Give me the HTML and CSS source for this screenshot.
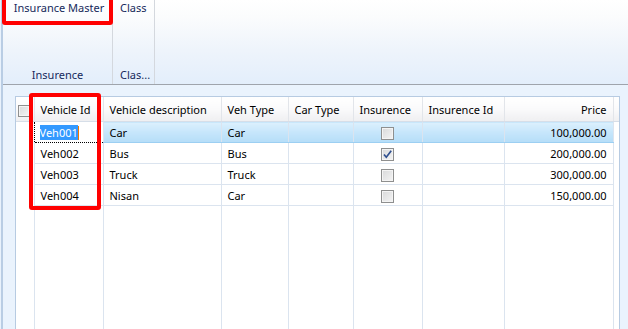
FILE: index.html
```html
<!DOCTYPE html>
<html lang="en">
	<head>
		<meta charset="UTF-8" />
		<title>Insurance Master</title>
		<link rel="stylesheet" href="styles.css">
	</head>
	<body>
		<div class="window">
			<div class="ribbon">
				<div class="group group-master">
					<div class="ribbon-button">Insurance Master</div>
					<div class="group-label">Insurence</div>
				</div>
				<div class="group group-class">
					<div class="ribbon-button">Class</div>
					<div class="group-label">Clas...</div>
				</div>
			</div>
			<div class="content">
				<div class="grid">
					<table>
						<colgroup>
							<col class="c-check">
							<col class="c-id">
							<col class="c-desc">
							<col class="c-type">
							<col class="c-cartype">
							<col class="c-ins">
							<col class="c-insid">
							<col class="c-price">
							<col class="c-fill">
						</colgroup>
						<thead>
							<tr>
								<th class="check-col"><span class="checkbox small"></span></th>
								<th>Vehicle Id</th>
								<th>Vehicle description</th>
								<th>Veh Type</th>
								<th>Car Type</th>
								<th>Insurence</th>
								<th>Insurence Id</th>
								<th class="num">Price</th>
								<th class="fill"></th>
							</tr>
						</thead>
						<tbody>
							<tr class="selected">
								<td class="check-col"></td>
								<td class="focus"><span class="edit">Veh001</span><span class="caret"></span></td>
								<td>Car</td>
								<td>Car</td>
								<td></td>
								<td class="center"><span class="checkbox"></span></td>
								<td></td>
								<td class="num">100,000.00</td>
								<td class="fill"></td>
							</tr>
							<tr>
								<td class="check-col"></td>
								<td>Veh002</td>
								<td>Bus</td>
								<td>Bus</td>
								<td></td>
								<td class="center">
									<span class="checkbox checked">
										<svg width="11" height="11" viewBox="0 0 11 11"><path d="M2 5.5 L4.3 8.2 L9.2 1.8" fill="none" stroke="#2f4f8f" stroke-width="1.7"/></svg>
									</span>
								</td>
								<td></td>
								<td class="num">200,000.00</td>
								<td class="fill"></td>
							</tr>
							<tr>
								<td class="check-col"></td>
								<td>Veh003</td>
								<td>Truck</td>
								<td>Truck</td>
								<td></td>
								<td class="center"><span class="checkbox"></span></td>
								<td></td>
								<td class="num">300,000.00</td>
								<td class="fill"></td>
							</tr>
							<tr>
								<td class="check-col"></td>
								<td>Veh004</td>
								<td>Nisan</td>
								<td>Car</td>
								<td></td>
								<td class="center"><span class="checkbox"></span></td>
								<td></td>
								<td class="num">150,000.00</td>
								<td class="fill"></td>
							</tr>
							<tr class="empty">
								<td class="check-col"></td>
								<td></td><td></td><td></td><td></td><td></td><td></td><td></td>
								<td class="fill"></td>
							</tr>
						</tbody>
					</table>
				</div>
			</div>
			<div class="mark mark-ribbon"></div>
			<div class="mark mark-column"></div>
		</div>
	</body>
</html>
```

FILE: styles.css
```css
html, body {
	margin: 0;
	padding: 0;
}
body {
	width: 628px;
	height: 329px;
	overflow: hidden;
	font-family: "Noto Sans", "DejaVu Sans", sans-serif;
	font-size: 11px;
	background-color: #e9f2fc;
}
.window {
	position: relative;
	height: 329px;
	margin-left: 1px;
	border-left: 2px solid #b9cde4;
	display: flex;
	flex-direction: column;
}
.ribbon {
	flex-shrink: 0;
	height: 84px;
	display: flex;
	background: linear-gradient(#ffffff 0%, #fbfcfd 20%, #eef4fb 60%, #e3eefb 100%);
	border-bottom: 1px solid #9fa4ac;
	box-shadow: 0 1px 0 #d2d8e0;
}
.group {
	display: flex;
	flex-direction: column;
	justify-content: space-between;
	align-items: center;
	border-right: 1px solid #d4d8de;
	color: #15295b;
	font-size: 11px;
}
.group-master {
	width: 109px;
}
.group-class {
	width: 41px;
}
.ribbon-button {
	padding-top: 1px;
	padding-left: 3px;
	line-height: 14px;
}
.group-label {
	line-height: 14px;
	padding-bottom: 2px;
}
.group-class .ribbon-button,
.group-class .group-label {
	align-self: flex-start;
	padding-left: 7px;
}
.content {
	flex: 1;
	min-height: 0;
	overflow: hidden;
	padding: 11px 8px 0 12px;
	background-color: #eaf3fd;
}
.grid {
	border: 1px solid #b7cbe2;
	border-bottom: none;
	background-color: #fff;
	height: 240px;
	overflow: hidden;
}
table {
	border-collapse: collapse;
	table-layout: fixed;
	width: 604px;
	color: #000;
}
.c-check { width: 18px; }
.c-id { width: 69px; }
.c-desc { width: 118px; }
.c-type { width: 67px; }
.c-cartype { width: 65px; }
.c-ins { width: 69px; }
.c-insid { width: 82px; }
.c-price { width: 109px; }
.c-fill { width: 7px; }
th {
	height: 24px;
	padding: 0 6px;
	font-weight: normal;
	text-align: left;
	white-space: nowrap;
	background: linear-gradient(#ffffff 0%, #fafafb 50%, #efeff1 100%);
	border-left: 1px solid #e2e5ea;
	border-bottom: 1px solid #d6dee8;
}
td {
	height: 20px;
	padding: 0 6px;
	white-space: nowrap;
	border-left: 1px solid #dbe4ef;
	border-bottom: 1px solid #dbe4ef;
}
th.check-col {
	border-left: none;
	padding: 0 0 0 2px;
}
td.check-col {
	border-left: none;
	border-bottom: none;
}
.num {
	text-align: right;
}
.center {
	text-align: center;
}
.fill {
	padding: 0;
}
td.fill {
	border-bottom: none;
}
.selected td {
	background: linear-gradient(#dcf0fd 0%, #c6e6fb 50%, #b5ddf8 100%);
	border-bottom-color: #9ccff2;
}
.selected td.check-col,
.selected td.fill {
	background: #fff;
}
.selected td.focus {
	background: #fff;
	border: 1px dotted #000;
	padding-left: 5px;
}
.edit {
	background-color: #3399ff;
	color: #fff;
}
.caret {
	display: inline-block;
	width: 1px;
	height: 14px;
	vertical-align: -3px;
	background-color: #f07800;
}
.empty td {
	height: 140px;
	border-bottom: none;
}
.checkbox {
	display: inline-block;
	width: 11px;
	height: 11px;
	border: 1px solid #8e8f8f;
	background: linear-gradient(135deg, #d8d9da 0%, #f4f4f4 100%);
	box-shadow: inset 0 0 0 1px #f4f4f4;
	vertical-align: middle;
	position: relative;
}
.checkbox svg {
	position: absolute;
	left: 0;
	top: 0;
}
.checkbox.small {
	width: 10px;
	height: 10px;
	margin-top: 1px;
}
.mark {
	position: absolute;
	border: 4px solid #ff0000;
	border-radius: 3px;
}
.mark-ribbon {
	left: -1px;
	top: -6px;
	width: 103px;
	height: 23px;
}
.mark-column {
	left: 26px;
	top: 93px;
	width: 64px;
	height: 109px;
}
```
